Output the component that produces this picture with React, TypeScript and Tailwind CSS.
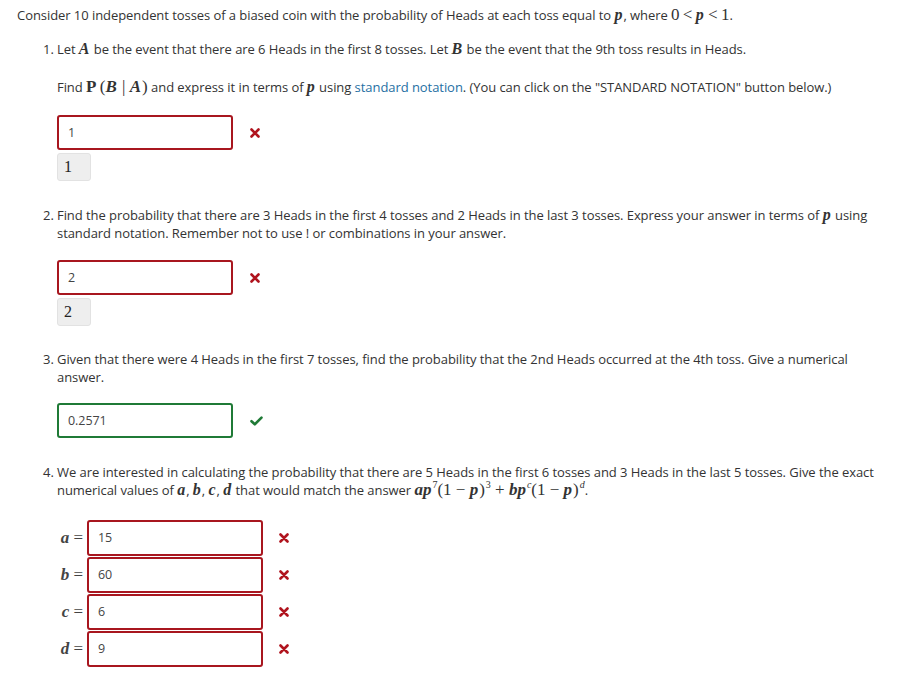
import React from 'react'

const RED = 'border-[#a8161f]'
const SERIF = "font-['Liberation_Serif',serif]"

function Cross() {
  return (
    <svg width="10" height="10" viewBox="0 0 10 10" className="shrink-0">
      <path d="M1.5 1.5 L8.5 8.5 M8.5 1.5 L1.5 8.5" stroke="#b0141e" strokeWidth="2.6" strokeLinecap="round" />
    </svg>
  )
}

function Check() {
  return (
    <svg width="13" height="10" viewBox="0 0 13 10" className="shrink-0">
      <path d="M1.5 5.2 L4.8 8.3 L11.5 1.6" stroke="#1f7a36" strokeWidth="2.6" fill="none" strokeLinecap="round" strokeLinejoin="round" />
    </svg>
  )
}

// math italic variable
function V({ children }: { children: React.ReactNode }) {
  return <span className={`${SERIF} italic font-bold text-[16px] leading-[18px] tracking-normal pr-[1px]`}>{children}</span>
}

// upright math (digits, operators)
function M({ children }: { children: React.ReactNode }) {
  return <span className={`${SERIF} text-[17px] leading-[18px] tracking-normal`}>{children}</span>
}

function Answer({ value, ok, preview }: { value: string; ok?: boolean; preview?: string }) {
  return (
    <div className="flex flex-col">
      <div className="flex items-center">
        <div
          className={`w-[176px] h-[35px] border-2 rounded-[3px] flex items-center pl-[9px] text-[12.5px] text-[#444] ${ok ? 'border-[#1f7a36]' : RED}`}
        >
          {value}
        </div>
        <div className="ml-[17px] flex items-center">{ok ? <Check /> : <Cross />}</div>
      </div>
      {preview && (
        <div className={`mt-[3px] w-[34px] h-[28px] bg-[#eeeeee] border border-[#e2e2e2] rounded-[3px] flex items-center pl-[6px] ${SERIF} text-[16px] text-[#222]`}>
          {preview}
        </div>
      )}
    </div>
  )
}

function Item({ n, children }: { n: number; children: React.ReactNode }) {
  return (
    <div className="flex ml-[26px] mr-[34px]">
      <span className="w-[14px] shrink-0">{n}.</span>
      <div className="flex-1">{children}</div>
    </div>
  )
}

function CoefRow({ name, value }: { name: string; value: string }) {
  return (
    <div className="flex items-center">
      <div className={`w-[30px] text-right pr-[4px] ${SERIF} text-[17px] text-[#444] whitespace-nowrap`}>
        <span className="italic font-bold">{name}</span> =
      </div>
      <div className={`w-[176px] h-[36px] border-2 ${RED} rounded-[3px] flex items-center pl-[9px] text-[12.5px] text-[#444]`}>
        {value}
      </div>
      <div className="ml-[16px] flex items-center">
        <Cross />
      </div>
    </div>
  )
}

function Sup({ children, italic }: { children: React.ReactNode; italic?: boolean }) {
  return (
    <span className={`inline-block align-top text-[10px] leading-[10px] -mt-[1px] ml-[1px] ${italic ? 'italic' : ''}`}>{children}</span>
  )
}

export default function App() {
  return (
    <div className="w-[914px] h-[682px] bg-white font-['Open_Sans',sans-serif] text-[13px] leading-[18px] tracking-[-0.06px] text-[#333] pt-[6px] pl-[17px] overflow-hidden">
      <p className="h-[18px]">
        Consider 10 independent tosses of a biased coin with the probability of Heads at each toss equal to <V>p</V>, where{' '}
        <M>0</M> <M>&lt;</M> <V>p</V> <M>&lt;</M> <M>1</M>.
      </p>

      <div className="mt-[16px]">
        <Item n={1}>
          <p className="h-[18px]">
            Let <V>A</V> be the event that there are 6 Heads in the first 8 tosses. Let <V>B</V> be the event that the 9th toss
            results in Heads.
          </p>
          <p className="mt-[20px] h-[18px]">
            Find{' '}
            <span className={`${SERIF} text-[17px] leading-[18px] tracking-normal`}>
              <b>P</b>&thinsp;(<b className="italic pr-[1px]">B</b> | <b className="italic pr-[1px]">A</b>)
            </span>{' '}
            and express it in terms of <V>p</V> using <span className="text-[#1f6fa3]">standard notation</span>. (You can click on
            the "STANDARD NOTATION" button below.)
          </p>
          <div className="mt-[19px]">
            <Answer value="1" preview="1" />
          </div>
        </Item>
      </div>

      <div className="mt-[25px]">
        <Item n={2}>
          <p>
            Find the probability that there are 3 Heads in the first 4 tosses and 2 Heads in the last 3 tosses. Express your answer
            in terms of <V>p</V> using standard notation. Remember not to use ! or combinations in your answer.
          </p>
          <div className="mt-[18px]">
            <Answer value="2" preview="2" />
          </div>
        </Item>
      </div>

      <div className="mt-[24px]">
        <Item n={3}>
          <p>
            Given that there were 4 Heads in the first 7 tosses, find the probability that the 2nd Heads occurred at the 4th toss.
            Give a numerical answer.
          </p>
          <div className="mt-[17px]">
            <Answer value="0.2571" ok />
          </div>
        </Item>
      </div>

      <div className="mt-[25px]">
        <Item n={4}>
          <p>
            We are interested in calculating the probability that there are 5 Heads in the first 6 tosses and 3 Heads in the last 5
            tosses. Give the exact numerical values of <V>a</V>, <V>b</V>, <V>c</V>, <V>d</V> that would match the answer{' '}
            <span className={`${SERIF} text-[17px] leading-[18px] tracking-normal`}>
              <b className="italic">ap</b>
              <Sup>7</Sup>(1 − <b className="italic pr-[1px]">p</b>)<Sup>3</Sup> + <b className="italic">bp</b>
              <Sup italic>c</Sup>(1 − <b className="italic pr-[1px]">p</b>)<Sup italic>d</Sup>
            </span>
            .
          </p>
        </Item>
        <div className="mt-[21px] ml-[40px] flex flex-col gap-[1px]">
          <CoefRow name="a" value="15" />
          <CoefRow name="b" value="60" />
          <CoefRow name="c" value="6" />
          <CoefRow name="d" value="9" />
        </div>
      </div>
    </div>
  )
}
